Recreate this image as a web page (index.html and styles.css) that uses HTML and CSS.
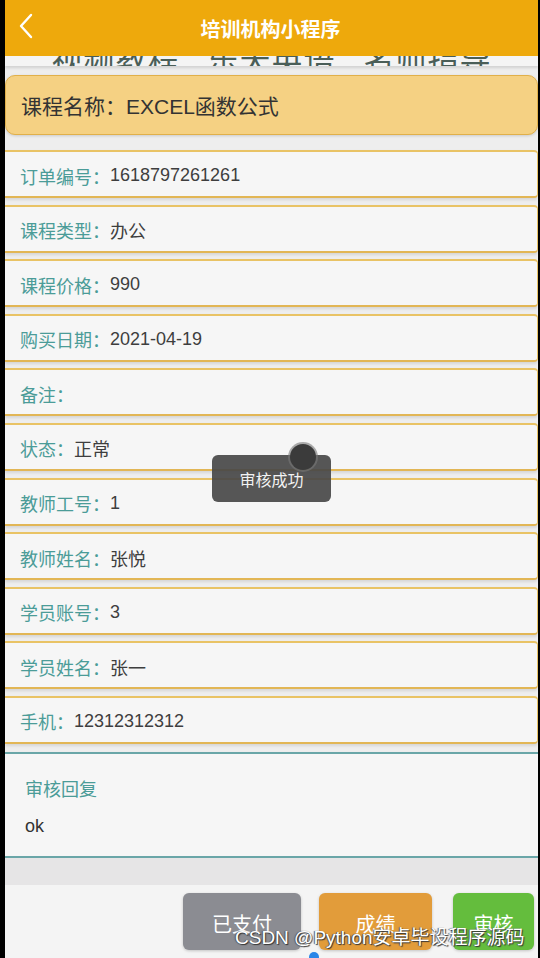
FILE: index.html
```html
<!DOCTYPE html>
<html lang="zh">
<head>
    <meta charset="UTF-8">
    <meta name="viewport" content="width=device-width, initial-scale=1.0">
    <title>培训机构小程序</title>
    <link rel="stylesheet" href="styles.css">
</head>
<body>
    <div class="app">
        <div class="header">
            <svg class="back" width="16" height="26" viewBox="0 0 16 26">
                <polyline points="13,2 3,13 13,24" fill="none" stroke="#fff" stroke-width="2.4" stroke-linecap="round" stroke-linejoin="round"/>
            </svg>
            <div class="title">培训机构小程序</div>
        </div>
        <div class="peek"><span>视频教程</span><span>乐天英语</span><span>名师指导</span></div>

        <div class="course-card">课程名称：EXCEL函数公式</div>

        <div class="rows">
            <div class="row"><span class="label">订单编号：</span>1618797261261</div>
            <div class="row"><span class="label">课程类型：</span>办公</div>
            <div class="row"><span class="label">课程价格：</span>990</div>
            <div class="row"><span class="label">购买日期：</span>2021-04-19</div>
            <div class="row"><span class="label">备注：</span></div>
            <div class="row"><span class="label">状态：</span>正常</div>
            <div class="row"><span class="label">教师工号：</span>1</div>
            <div class="row"><span class="label">教师姓名：</span>张悦</div>
            <div class="row"><span class="label">学员账号：</span>3</div>
            <div class="row"><span class="label">学员姓名：</span>张一</div>
            <div class="row"><span class="label">手机：</span>12312312312</div>
        </div>

        <div class="reply">
            <div class="reply-title">审核回复</div>
            <div class="reply-text">ok</div>
        </div>

        <div class="spacer"></div>

        <div class="bottom-bar">
            <button class="btn btn-gray">已支付</button>
            <button class="btn btn-orange">成绩</button>
            <button class="btn btn-green">审核</button>
        </div>

        <!-- toast and touch marks -->
        <div class="toast">审核成功</div>
        <div class="touch"></div>
        <div class="touch-blue"></div>
        <div class="watermark">CSDN @Python安卓毕设程序源码</div>
    </div>
</body>
</html>
```

FILE: styles.css
```css
body {
    margin: 0;
    background-color: #000;
    font-family: "Liberation Sans", "Noto Sans CJK SC", sans-serif;
    height: 958px;
    overflow: hidden;
}
.app {
    position: relative;
    margin-left: 5px;
    width: 533px;
    height: 958px;
    background-color: #eeeeee;
    overflow: hidden;
}
.header {
    height: 56px;
    background-color: #eea90c;
    display: flex;
    align-items: center;
    justify-content: center;
    position: relative;
}
.back {
    position: absolute;
    left: 13px;
    top: 13px;
}
.title {
    color: #fff;
    font-size: 20px;
    font-weight: bold;
    font-family: "Noto Sans CJK SC", sans-serif;
    margin-left: -2px;
}
.peek {
    height: 10px;
    overflow: hidden;
    display: flex;
    justify-content: center;
    gap: 28px;
    background-color: #f4f4f4;
    box-shadow: 0 2px 3px rgba(0, 0, 0, 0.12);
    font-family: "Noto Sans CJK SC", sans-serif;
    font-size: 31px;
    line-height: 10px;
    color: #4a5e58;
}
.peek span {
    display: block;
    margin-top: -14px;
    line-height: 31px;
    letter-spacing: 1px;
}
.course-card {
    margin-top: 9px;
    height: 60px;
    box-sizing: border-box;
    background-color: #f5d183;
    border: 1px solid #e1b04a;
    border-radius: 10px;
    display: flex;
    align-items: center;
    padding-left: 15px;
    font-size: 21px;
    color: #333;
    box-shadow: 0 1px 3px rgba(0, 0, 0, 0.15);
}
.rows {
    margin-top: 15px;
    display: flex;
    flex-direction: column;
    gap: 6.6px;
}
.row {
    height: 48px;
    box-sizing: border-box;
    background-color: #f6f6f6;
    border-top: 2px solid #e9c365;
    border-bottom: 2px solid #e2b655;
    border-right: 1px solid #e9c365;
    border-radius: 0 4px 4px 0;
    display: flex;
    align-items: center;
    padding: 3px 0 0 15px;
    font-size: 18px;
    color: #3e3e3e;
    box-shadow: 0 2px 3px rgba(0, 0, 0, 0.1);
}
.label {
    color: #4b9c98;
}
.reply {
    margin-top: 8px;
    height: 106px;
    box-sizing: border-box;
    background-color: #f6f6f6;
    border-top: 2px solid #6aa6a8;
    border-bottom: 2px solid #6aa6a8;
    padding: 22px 0 0 20px;
    box-shadow: 0 2px 3px rgba(0, 0, 0, 0.1);
}
.reply-title {
    color: #4b9c98;
    font-size: 18px;
    font-family: "Noto Sans CJK SC", sans-serif;
    line-height: 24px;
}
.reply-text {
    margin-top: 14px;
    color: #333;
    font-size: 18px;
    line-height: 24px;
}
.spacer {
    height: 27px;
    background-color: #e6e5e6;
}
.bottom-bar {
    height: 73px;
    background-color: #f4f4f4;
    display: flex;
    align-items: flex-start;
    padding-top: 8px;
    box-sizing: border-box;
    padding-left: 178px;
}
.btn {
    height: 57px;
    border: none;
    border-radius: 6px;
    color: #fff;
    font-size: 20px;
    font-family: "Noto Sans CJK SC", sans-serif;
    padding: 4px 0 0 0;
    box-shadow: 0 1px 3px rgba(0, 0, 0, 0.2);
}
.btn-gray {
    width: 118px;
    background-color: #8b8c92;
}
.btn-orange {
    width: 113px;
    margin-left: 18px;
    background-color: #e29c3a;
}
.btn-green {
    width: 81px;
    margin-left: 21px;
    background-color: #64bd3d;
}
.toast {
    position: absolute;
    left: 207px;
    top: 455px;
    width: 119px;
    height: 47px;
    border-radius: 6px;
    background-color: rgba(72, 72, 72, 0.92);
    color: #f2f2f2;
    font-size: 16px;
    font-family: "Noto Sans CJK SC", sans-serif;
    display: flex;
    align-items: center;
    justify-content: center;
}
.touch {
    position: absolute;
    left: 285px;
    top: 444px;
    width: 26px;
    height: 26px;
    border-radius: 50%;
    background-color: #3b3b3b;
    box-shadow: 0 0 0 2px rgba(120, 120, 120, 0.6);
}
.touch-blue {
    position: absolute;
    left: 304px;
    top: 952px;
    width: 10px;
    height: 10px;
    border-radius: 50%;
    background-color: #2a86e8;
}
.watermark {
    position: absolute;
    left: 230px;
    top: 922px;
    font-size: 19px;
    color: #fff;
    font-family: "Liberation Sans", "Noto Sans CJK SC", sans-serif;
    text-shadow: 1px 1px 1px #333, -1px 0 1px #555;
}
```
